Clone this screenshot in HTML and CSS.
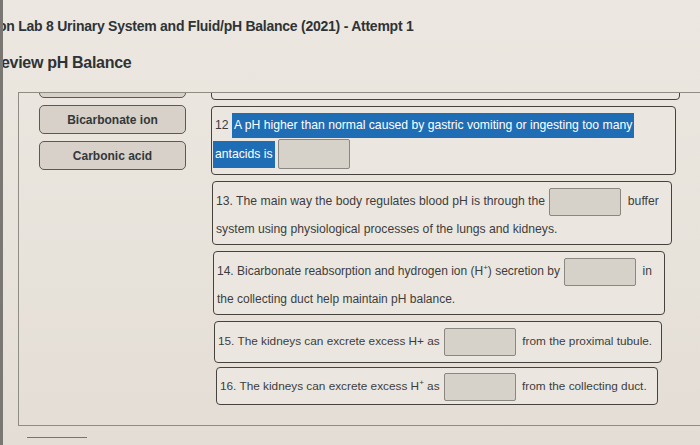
FILE: index.html
```html
<!DOCTYPE html>
<html>
<head>
<meta charset="utf-8">
<link rel="stylesheet" href="styles.css">
</head>
<body>
<div class="screen">
  <div class="head">
    <h1 class="title">on Lab 8 Urinary System and Fluid/pH Balance (2021) - Attempt 1</h1>
    <h2 class="subtitle">eview pH Balance</h2>
  </div>
  <div class="panel">
    <div class="chips">
      <div class="chip"></div>
      <div class="chip">Bicarbonate ion</div>
      <div class="chip">Carbonic acid</div>
    </div>
    <div class="questions">
      <div class="q q-cut"></div>
      <div class="q q12">12 <span class="sel sel1">A pH higher than normal caused by gastric vomiting or ingesting too many</span><br><span class="sel sel2">antacids is</span><span class="blank blank12"></span></div>
      <div class="q q13">13. The main way the body regulates blood pH is through the <span class="blank"></span> <span class="after">buffer</span><br>system using physiological processes of the lungs and kidneys.</div>
      <div class="q q14">14. Bicarbonate reabsorption and hydrogen ion (H<sup>+</sup>) secretion by <span class="blank"></span> <span class="after">in</span><br>the collecting duct help maintain pH balance.</div>
      <div class="q q15">15. The kidneys can excrete excess H+ as <span class="blank"></span> <span class="after">from the proximal tubule.</span></div>
      <div class="q q16">16. The kidneys can excrete excess H<sup>+</sup> as <span class="blank"></span> <span class="after">from the collecting duct.</span></div>
    </div>
  </div>
  <div class="scroll-line"></div>
</div>
</body>
</html>
```
FILE: styles.css
```css
html, body {
  margin: 0;
  padding: 0;
}
body {
  width: 700px;
  height: 445px;
  overflow: hidden;
  background: #e8e3db;
  font-family: "Liberation Sans", Arial, sans-serif;
  color: #3a3a3a;
}
.screen {
  height: 445px;
  border-left: 3px solid #7a7671;
  background: linear-gradient(180deg, #ece8e1 0%, #e7e2da 60%, #e4ddd6 100%);
}
.head {
  overflow: hidden;
}
.title {
  margin: 0 0 0 -5px;
  padding-top: 17px;
  font-size: 14px;
  line-height: 18px;
  font-weight: bold;
  color: #2e3336;
  letter-spacing: -0.25px;
  white-space: nowrap;
}
.subtitle {
  margin: 18px 0 0 -2px;
  font-size: 16px;
  line-height: 20px;
  font-weight: bold;
  color: #2e3336;
  letter-spacing: -0.3px;
}
.panel {
  margin: 19px 0 0 15px;
  width: 677px;
  height: 332px;
  box-sizing: content-box;
  border: 1px solid #8f8b85;
  border-right-color: #c9c4bc;
  overflow: hidden;
  display: flex;
  align-items: flex-start;
  gap: 25px;
  padding-left: 20px;
}
.chips {
  width: 147px;
  flex: none;
  display: flex;
  flex-direction: column;
  gap: 7px;
  margin-top: -24px;
}
.chip {
  height: 29px;
  box-sizing: border-box;
  border: 1.5px solid #5c5953;
  border-radius: 5px;
  background: #d7d1c9;
  display: flex;
  align-items: center;
  justify-content: center;
  font-size: 12px;
  font-weight: bold;
  color: #33373a;
}
.questions {
  display: flex;
  flex-direction: column;
  gap: 6px;
  margin-top: -53px;
}
.q {
  box-sizing: border-box;
  border: 1.5px solid #46433e;
  border-radius: 4px;
  background: #ebe7e0;
  padding: 0 4px 0 3px;
  font-size: 12.2px;
  line-height: 27px;
  color: #3d3d3d;
  white-space: nowrap;
}
.q sup {
  font-size: 8px;
  line-height: 0;
}
.q-cut {
  height: 60px;
  width: 469px;
}
.q12 {
  width: 465px;
  padding-top: 5px;
  padding-bottom: 5px;
}
.q13 {
  width: 460px;
  margin-left: 1px;
  padding-top: 6px;
  padding-bottom: 1px;
}
.q14 {
  width: 452px;
  margin-left: 2px;
  padding-top: 6px;
  padding-bottom: 1px;
  font-size: 12px;
}
.q15 {
  width: 448px;
  margin-left: 3px;
  padding-top: 5px;
  padding-bottom: 6px;
  line-height: 28px;
  font-size: 11.8px;
}
.q16 {
  width: 442px;
  margin-left: 5px;
  margin-top: -2px;
  padding-top: 4px;
  padding-bottom: 3px;
  line-height: 28px;
  font-size: 11.8px;
}
.sel {
  display: inline-block;
  vertical-align: middle;
  background: #1f6db4;
  color: #ffffff;
  padding: 0 2px;
}
.sel1 {
  line-height: 25px;
}
.sel2 {
  line-height: 27px;
  margin-left: -2px;
}
.blank {
  display: inline-block;
  vertical-align: middle;
  width: 72px;
  height: 28px;
  box-sizing: border-box;
  border: 1px solid #8a8680;
  border-radius: 2px;
  background: #d6d2ca;
  margin-left: 1px;
}
.blank12 {
  height: 30px;
  margin-left: 3px;
}
.after {
  margin-left: 3px;
}
.scroll-line {
  margin: 11px 0 0 24px;
  width: 60px;
  height: 1px;
  background: #77736e;
}
```
